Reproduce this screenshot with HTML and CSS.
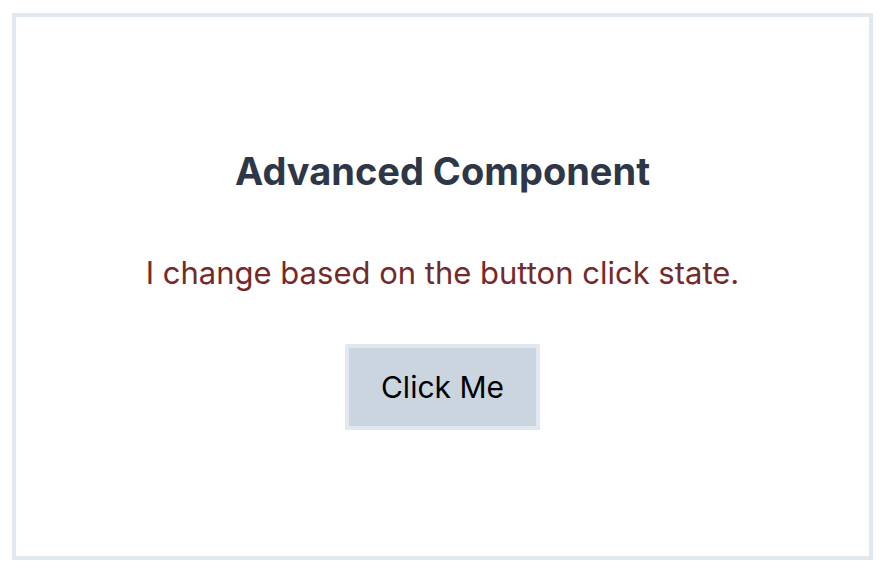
FILE: index.html
```html
<!DOCTYPE html>
<html>
<head>
<meta charset="utf-8">
<link rel="stylesheet" href="styles.css">
</head>
<body>
<div class="card">
  <h1 class="title">Advanced Component</h1>
  <p class="message">I change based on the button click state.</p>
  <button class="btn">Click Me</button>
</div>
</body>
</html>
```
FILE: styles.css
```css
html, body { margin: 0; padding: 0; background: #ffffff; }
body { padding: 13px 12px 10px 12px; font-family: Inter, "Noto Sans", sans-serif; }
.card {
  box-sizing: border-box;
  height: 547px;
  border: 4px solid #e2e8f0;
  padding-top: 6px;
  display: flex;
  flex-direction: column;
  align-items: center;
  justify-content: center;
}
.title {
  margin: 0;
  font-size: 38px;
  font-weight: 700;
  color: #2d3748;
  line-height: 1.2;
}
.message {
  margin: 59px 0 0 0;
  font-size: 31px;
  color: #742a2a;
  line-height: 1.2;
}
.btn {
  margin-top: 53px;
  font-family: Inter, "Noto Sans", sans-serif;
  font-size: 30px;
  line-height: 36px;
  color: #000;
  background: #cbd5e0;
  border: 4px solid #e2e8f0;
  padding: 21px 32px;
}
```
